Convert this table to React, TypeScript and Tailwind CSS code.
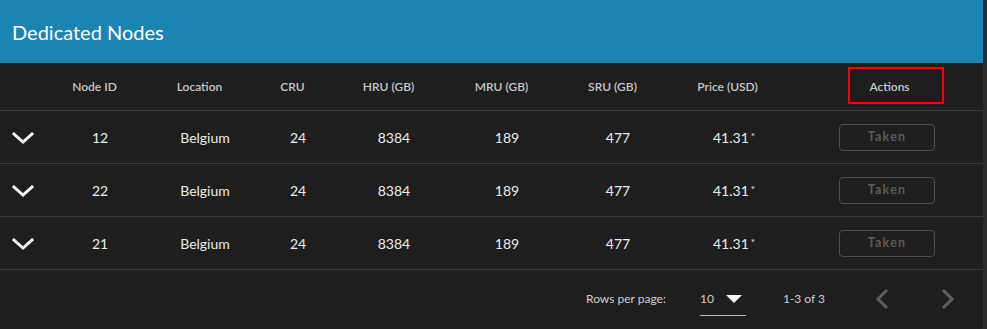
const rows = [
  { id: 12, location: "Belgium", cru: 24, hru: 8384, mru: 189, sru: 477, price: "41.31" },
  { id: 22, location: "Belgium", cru: 24, hru: 8384, mru: 189, sru: 477, price: "41.31" },
  { id: 21, location: "Belgium", cru: 24, hru: 8384, mru: 189, sru: 477, price: "41.31" },
];

const cols = "grid grid-cols-[50px_100px_110px_76px_116px_110px_112px_120px_189px]";

const ChevronDown = () => (
  <svg width="22" height="12" viewBox="0 0 22 12" fill="none">
    <polyline points="2,2 11,10 20,2" stroke="#f2f2f2" strokeWidth="3" strokeLinecap="square" />
  </svg>
);

const Chevron = ({ dir }: { dir: "left" | "right" }) => (
  <svg width="14" height="22" viewBox="0 0 14 22" fill="none">
    <polyline
      points={dir === "left" ? "12,2 3,11 12,20" : "2,2 11,11 2,20"}
      stroke="#5f5f5f"
      strokeWidth="3"
    />
  </svg>
);

const App = () => {
  return (
    <div
      className="w-[987px] h-[329px] bg-[#2b2b2b] overflow-hidden"
      style={{ fontFamily: "Lato, 'Open Sans', sans-serif" }}
    >
      <div className="w-[983px] h-[329px] bg-[#1e1e1e] flex flex-col rounded-br-[3px]">
        <div className="h-[63px] bg-[#1b84b2] flex items-center px-3">
          <span className="text-[20px] text-white">Dedicated Nodes</span>
        </div>

        <div className={`${cols} h-[48px] items-center border-b border-[#3a3a3a] text-[12px] font-semibold text-[#c8c8c8]`}>
          <div />
          <div className="text-center pr-[11px]">Node ID</div>
          <div className="text-center pr-[11px]">Location</div>
          <div className="text-center pr-[11px]">CRU</div>
          <div className="text-center pr-[11px]">HRU (GB)</div>
          <div className="text-center pr-[11px]">MRU (GB)</div>
          <div className="text-center pr-[11px]">SRU (GB)</div>
          <div className="text-center pr-[13px]">Price (USD)</div>
          <div className="relative text-center pl-[2px]">
            Actions
            <div className="absolute left-[54px] top-[-11px] w-[96px] h-[37px] border-2 border-[#ff0000]" />
          </div>
        </div>

        {rows.map((r) => (
          <div
            key={r.id}
            className={`${cols} h-[53px] items-center border-b border-[#3a3a3a] text-[14px] text-[#ececec]`}
          >
            <div className="pl-3 pt-[2px] flex items-center">
              <ChevronDown />
            </div>
            <div className="text-center">{r.id}</div>
            <div className="text-center">{r.location}</div>
            <div className="text-center">{r.cru}</div>
            <div className="text-center">{r.hru}</div>
            <div className="text-center">{r.mru}</div>
            <div className="text-center">{r.sru}</div>
            <div className="text-center">
              {r.price}
              <span className="relative top-[-3px] text-[10px] ml-[2px]">*</span>
            </div>
            <div className="flex justify-center pr-[3px]">
              <button className="w-[96px] h-[27px] rounded-[4px] border border-[#4f4f4f] text-[12.5px] font-bold tracking-[1.2px] text-[#5c5c5c]">
                Taken
              </button>
            </div>
          </div>
        ))}

        <div className="flex-1 flex items-center text-[12px] text-[#d0d0d0] pb-[2px]">
          <div className="ml-[586px]">Rows per page:</div>
          <div className="ml-[34px] w-[46px] h-[34px] flex items-center border-b border-[#bdbdbd] mt-[1px]">
            <span>10</span>
            <svg className="ml-[12px]" width="16" height="10" viewBox="0 0 16 10">
              <polygon points="0,1 16,1 8,9" fill="#f5f5f5" />
            </svg>
          </div>
          <div className="ml-[37px]">1-3 of 3</div>
          <div className="ml-[50px] flex items-center">
            <Chevron dir="left" />
          </div>
          <div className="ml-[52px] flex items-center">
            <Chevron dir="right" />
          </div>
        </div>
      </div>
    </div>
  );
};

export default App;
